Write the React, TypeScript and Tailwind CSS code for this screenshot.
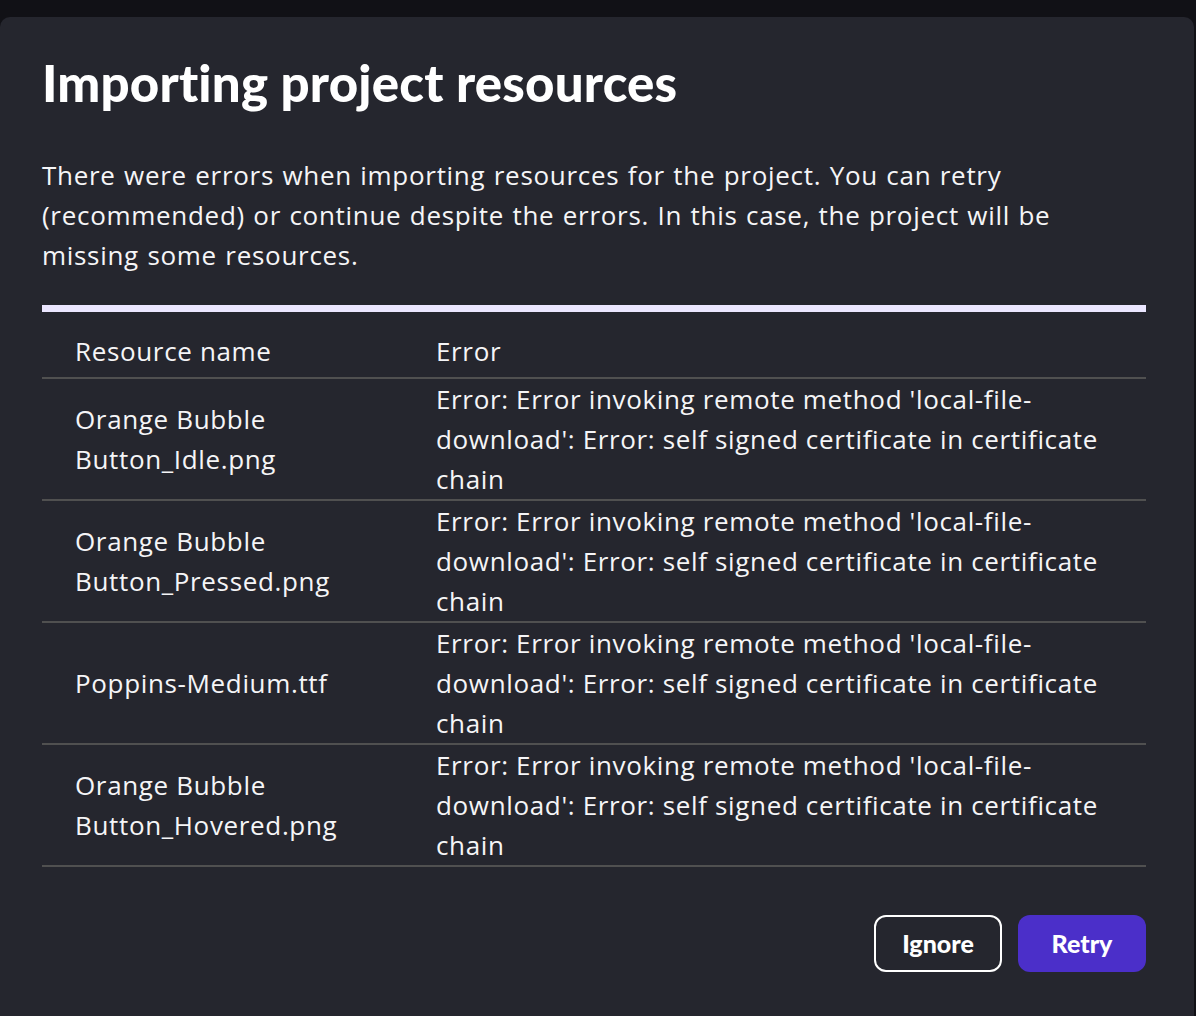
import React from "react";

const rows = [
  { name: "Orange Bubble Button_Idle.png" },
  { name: "Orange Bubble Button_Pressed.png" },
  { name: "Poppins-Medium.ttf" },
  { name: "Orange Bubble Button_Hovered.png" },
];

const err =
  "Error: Error invoking remote method 'local-file-download': Error: self signed certificate in certificate chain";

export default function App() {
  return (
    <div className="min-h-[1016px] w-[1196px] overflow-hidden bg-[#111116] pt-[17px]">
      <div
        className="h-[1010px] w-[1194px] rounded-[10px] bg-[#25262e] px-[42px] pt-[37px] text-white"
        style={{ fontFamily: '"Open Sans", sans-serif' }}
      >
        <h1
          className="text-[51px] font-black leading-[57px] tracking-[0.2px] text-white [font-variant-ligatures:none]"
          style={{ fontFamily: 'Lato, sans-serif' }}
        >
          Importing project resources
        </h1>
        <p className="mt-[44px] text-[26px] leading-[40px] tracking-[0.7px] [word-spacing:1px] text-[#f5f5f7]">
          There were errors when importing resources for the project. You can retry (recommended) or
          continue despite the errors. In this case, the project will be missing some resources.
        </p>
        <div className="mt-[30px] h-[7px] w-[1104px] bg-[#ebe6ff]" />
        <table className="w-[1104px] border-collapse text-[26px] leading-[40px] tracking-[0.65px] text-[#f5f5f7]">
          <thead>
            <tr className="border-b-2 border-[#505050]">
              <th className="w-[361px] px-[33px] pt-[19px] pb-[6px] text-left font-normal">
                Resource name
              </th>
              <th className="px-[33px] pt-[19px] pb-[6px] text-left font-normal">Error</th>
            </tr>
          </thead>
          <tbody>
            {rows.map((r) => (
              <tr key={r.name} className="border-b-2 border-[#505050]">
                <td className="w-[361px] px-[33px] py-0 align-middle">{r.name}</td>
                <td className="px-[33px] py-0 align-middle">{err}</td>
              </tr>
            ))}
          </tbody>
        </table>
        <div className="mt-[48px] flex w-[1104px] justify-end gap-[16px]">
          <button
            className="h-[57px] w-[128px] rounded-[12px] border-2 border-white text-[25px] font-black text-white"
            style={{ fontFamily: 'Lato, sans-serif' }}
          >
            Ignore
          </button>
          <button
            className="h-[57px] w-[128px] rounded-[12px] bg-[#4b2fc9] text-[25px] font-black text-white"
            style={{ fontFamily: 'Lato, sans-serif' }}
          >
            Retry
          </button>
        </div>
      </div>
    </div>
  );
}
